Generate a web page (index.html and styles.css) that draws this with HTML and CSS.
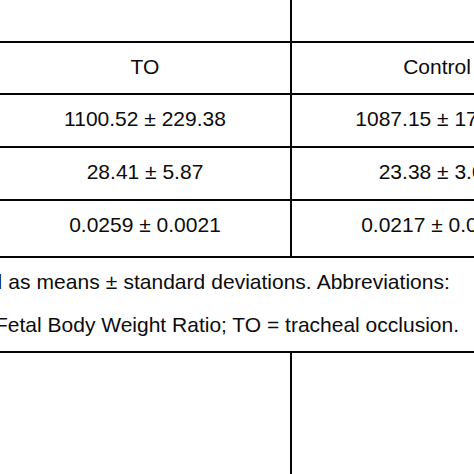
FILE: index.html
```html
<!DOCTYPE html>
<html lang="en">
<head>
<meta charset="utf-8">
<title>Table</title>
<link rel="stylesheet" href="styles.css">
</head>
<body>
<div class="page">
  <div class="sheet">
    <div class="cell left"></div>
    <div class="cell right"></div>

    <div class="cell left row1"><span class="val">TO</span></div>
    <div class="cell right row1"><span class="val">Control</span></div>

    <div class="cell left"><span class="val">1100.52 ± 229.38</span></div>
    <div class="cell right"><span class="val">1087.15 ± 176.42</span></div>

    <div class="cell left"><span class="val">28.41 ± 5.87</span></div>
    <div class="cell right"><span class="val">23.38 ± 3.06</span></div>

    <div class="cell left"><span class="val">0.0259 ± 0.0021</span></div>
    <div class="cell right"><span class="val">0.0217 ± 0.0019</span></div>

    <div class="cell caption">
      <div class="cap-line cap-1">Values are expressed as means ± standard deviations. Abbreviations:</div>
      <div class="cap-line cap-2">Fetal Body Weight Ratio; TO = tracheal occlusion.</div>
    </div>

    <div class="cell left last"></div>
    <div class="cell right last"></div>
  </div>
</div>
</body>
</html>
```
FILE: styles.css
```css
html, body {
  margin: 0;
  padding: 0;
  background: #ffffff;
}

.page {
  width: 474px;
  height: 474px;
  overflow: hidden;
  font-family: "Liberation Sans", Arial, sans-serif;
  font-size: 21px;
  color: #0c0c0c;
}

.sheet {
  display: grid;
  grid-template-columns: 292px 290px;
  grid-template-rows: 43px 52px 53px 53px 57px 95px 121px;
  width: 582px;
}

.cell {
  box-sizing: border-box;
  border-bottom: 2px solid #050505;
  text-align: center;
  padding-top: 12px;
  line-height: 24px;
  white-space: nowrap;
  overflow: hidden;
}

.left {
  border-right: 2px solid #050505;
}

.last {
  border-bottom: none;
}

.caption {
  grid-column: 1 / span 2;
  text-align: left;
  padding-top: 2px;
}

.cap-line {
  line-height: 43px;
  white-space: nowrap;
}

.cap-1 {
  margin-left: -200px;
  word-spacing: 0.3px;
}

.cap-2 {
  margin-left: -5px;
}
```
